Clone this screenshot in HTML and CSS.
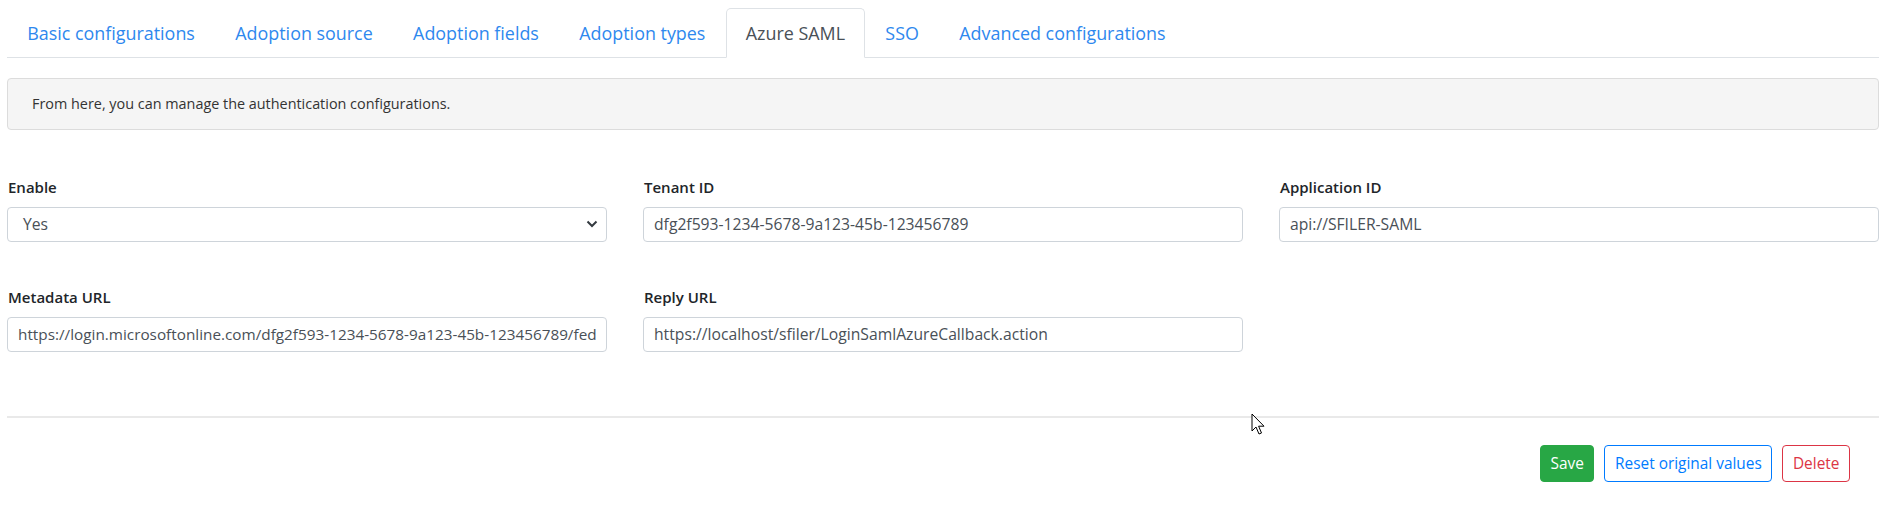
FILE: index.html
```html
<!DOCTYPE html>
<html lang="en">
<head>
    <meta charset="UTF-8">
    <title>Azure SAML</title>
    <link rel="stylesheet" href="styles.css">
</head>
<body>
    <div class="page">
        <ul class="nav-tabs">
            <li><a href="#">Basic configurations</a></li>
            <li><a href="#">Adoption source</a></li>
            <li><a href="#">Adoption fields</a></li>
            <li><a href="#">Adoption types</a></li>
            <li><a href="#" class="active">Azure SAML</a></li>
            <li><a href="#">SSO</a></li>
            <li><a href="#">Advanced configurations</a></li>
        </ul>

        <div class="tab-pane">
            <div class="alert">From here, you can manage the authentication configurations.</div>

            <div class="form-grid">
                <div class="field">
                    <label>Enable</label>
                    <div class="select">
                        <span>Yes</span>
                        <svg width="12" height="8" viewBox="0 0 12 8"><path d="M1.5 1.5 L6 6 L10.5 1.5" fill="none" stroke="#343a40" stroke-width="2"/></svg>
                    </div>
                </div>
                <div class="field">
                    <label>Tenant ID</label>
                    <input class="input" type="text" value="dfg2f593-1234-5678-9a123-45b-123456789">
                </div>
                <div class="field">
                    <label>Application ID</label>
                    <input class="input" type="text" value="api://SFILER-SAML">
                </div>
                <div class="field">
                    <label>Metadata URL</label>
                    <input class="input input-tight" type="text" value="https://login.microsoftonline.com/dfg2f593-1234-5678-9a123-45b-123456789/federationmetadata/2007-06/federationmetadata.xml">
                </div>
                <div class="field">
                    <label>Reply URL</label>
                    <input class="input" type="text" value="https://localhost/sfiler/LoginSamlAzureCallback.action">
                </div>
            </div>

            <hr class="divider">

            <div class="actions">
                <button class="btn btn-save">Save</button>
                <button class="btn btn-reset">Reset original values</button>
                <button class="btn btn-delete">Delete</button>
            </div>
        </div>
    </div>

    <!-- mouse pointer in the capture -->
    <svg class="cursor" width="16" height="24" viewBox="0 0 16 24">
        <path d="M1 1 L1 18 L5 14 L8 21 L10.5 20 L7.6 13.2 L13 13.2 Z" fill="#fff" stroke="#000" stroke-width="1"/>
    </svg>
</body>
</html>
```

FILE: styles.css
```css
body {
    margin: 0;
    font-family: "Open Sans", "Noto Sans", sans-serif;
    color: #212529;
    background: #fff;
}
.page {
    padding: 8px 7px 0 7px;
}
.nav-tabs {
    display: flex;
    list-style: none;
    margin: 0;
    padding: 0;
    border-bottom: 1px solid #dee2e6;
}
.nav-tabs a {
    display: block;
    margin-bottom: -1px;
    padding: 9.6px 19.2px;
    font-size: 17.9px;
    line-height: 28.8px;
    color: #2e88ee;
    text-decoration: none;
    border: 1px solid transparent;
    border-radius: 5px 5px 0 0;
}
.nav-tabs a.active {
    color: #495057;
    background: #fff;
    border-color: #dee2e6 #dee2e6 #fff;
}
.alert {
    margin-top: 20px;
    height: 52px;
    box-sizing: border-box;
    padding: 0 24px;
    display: flex;
    align-items: center;
    font-size: 14.4px;
    color: #333;
    background: #f5f5f5;
    border: 1px solid #dcdcdc;
    border-radius: 4px;
}
.form-grid {
    display: grid;
    grid-template-columns: repeat(3, 1fr);
    column-gap: 36px;
    row-gap: 43px;
    margin-top: 45px;
}
.field {
    display: flex;
    flex-direction: column;
}
.field label {
    font-size: 15px;
    font-weight: 600;
    line-height: 24px;
    margin-bottom: 8px;
    padding-left: 1px;
}
.input, .select {
    height: 35px;
    box-sizing: border-box;
    border: 1px solid #ced4da;
    border-radius: 4px;
    font-family: inherit;
    font-size: 15.7px;
    color: #495057;
    background: #fff;
}
.input {
    padding: 0 10px;
    width: 100%;
    outline: none;
}
.input-tight {
    font-size: 15.3px;
}
.select {
    display: flex;
    align-items: center;
    justify-content: space-between;
    padding: 0 8px 0 15px;
}
.divider {
    margin: 64px 0 0 0;
    border: 0;
    border-top: 2px solid #e9e9e9;
}
.actions {
    display: flex;
    justify-content: flex-end;
    gap: 10px;
    padding: 27px 29px 0 0;
}
.btn {
    font-family: inherit;
    font-size: 15.4px;
    line-height: 25px;
    padding: 4.8px 9.6px;
    border-radius: 4px;
    border: 1px solid;
    background: #fff;
}
.btn-save {
    color: #fff;
    background: #28a745;
    border-color: #28a745;
}
.btn-reset {
    color: #007bff;
    border-color: #007bff;
}
.btn-delete {
    color: #dc3545;
    border-color: #dc3545;
}
.cursor {
    position: absolute;
    left: 1251px;
    top: 413px;
}
```
